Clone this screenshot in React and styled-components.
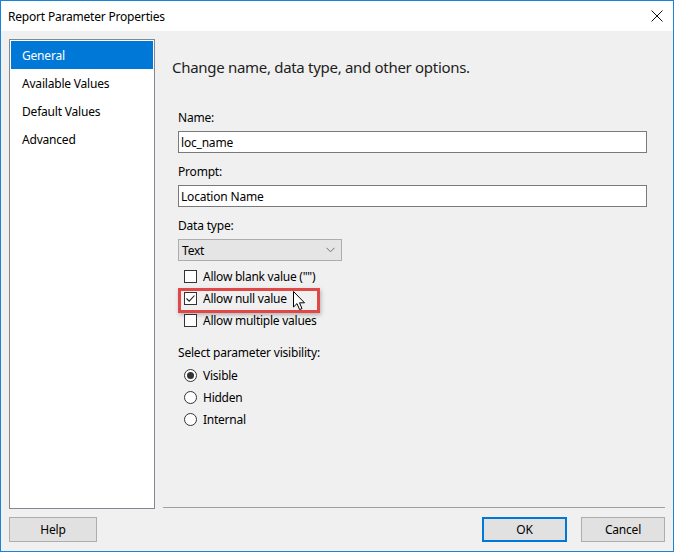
import React from "react";
import styled, { createGlobalStyle } from "styled-components";

const Global = createGlobalStyle`
  html, body { margin: 0; padding: 0; background: #ffffff; }
  * { box-sizing: border-box; }
  body { font-family: "Noto Sans", "Open Sans", sans-serif; font-size: 12px; color: #000; }
`;

const Window = styled.div`
  width: 674px;
  height: 552px;
  border: 1px solid #1883d7;
  display: flex;
  flex-direction: column;
  background: #f0f0f0;
`;

const TitleBar = styled.div`
  height: 30px;
  background: #ffffff;
  display: flex;
  align-items: center;
  justify-content: space-between;
  padding: 0 10px 0 7px;
  font-size: 12px;
  letter-spacing: -0.2px;
`;

const CloseBtn = styled.div`
  width: 12px;
  height: 12px;
  display: flex;
`;

const Body = styled.div`
  flex: 1;
  display: flex;
  flex-direction: column;
  padding: 8px 8px 9px 8px;
`;

const Main = styled.div`
  flex: 1;
  display: flex;
`;

const Sidebar = styled.div`
  width: 146px;
  background: #ffffff;
  border: 1px solid #828790;
  padding: 1px;
  display: flex;
  flex-direction: column;
`;

const NavItem = styled.div`
  height: 28px;
  display: flex;
  align-items: center;
  padding-left: 11px;
  font-size: 12px;
  letter-spacing: -0.2px;
  background: ${(p) => (p.$active ? "#0078d7" : "transparent")};
  color: ${(p) => (p.$active ? "#ffffff" : "#000000")};
`;

const Content = styled.div`
  flex: 1;
  margin-left: 8px;
  margin-bottom: 1px;
  border-bottom: 1px solid #a0a0a0;
  display: flex;
  flex-direction: column;
  padding: 18px 18px 0 9px;
`;

const Heading = styled.div`
  font-size: 15px;
  line-height: 20px;
  letter-spacing: -0.3px;
  color: #1e1e1e;
`;

const Form = styled.div`
  padding-left: 6px;
  margin-top: 33px;
  display: flex;
  flex-direction: column;
`;

const Label = styled.div`
  font-size: 12px;
  line-height: 16px;
  letter-spacing: -0.2px;
  margin-top: ${(p) => p.$mt || 0}px;
  margin-bottom: ${(p) => p.$mb || 5}px;
`;

const TextBox = styled.div`
  height: 22px;
  background: #ffffff;
  border: 1px solid #7a7a7a;
  display: flex;
  align-items: center;
  padding-left: 2px;
  font-size: 12px;
  letter-spacing: -0.2px;
`;

const Select = styled.div`
  width: 164px;
  height: 22px;
  background: #e5e5e5;
  border: 1px solid #adadad;
  display: flex;
  align-items: center;
  justify-content: space-between;
  padding: 0 6px 0 3px;
  font-size: 12px;
  letter-spacing: -0.2px;
`;

const Options = styled.div`
  display: flex;
  flex-direction: column;
  margin-top: 4px;
`;

const OptionRow = styled.div`
  position: relative;
  height: 22px;
  display: flex;
  align-items: center;
  padding-left: 6px;
  gap: 6px;
  font-size: 12px;
  letter-spacing: -0.25px;
`;

const Box = styled.div`
  width: 13px;
  height: 13px;
  border: 1px solid #333333;
  background: #ffffff;
  display: flex;
  align-items: center;
  justify-content: center;
`;

const Radio = styled.div`
  width: 13px;
  height: 13px;
  border: 1px solid #333333;
  border-radius: 50%;
  background: #ffffff;
  display: flex;
  align-items: center;
  justify-content: center;
  &::after {
    content: "";
    display: ${(p) => (p.$checked ? "block" : "none")};
    width: 7px;
    height: 7px;
    border-radius: 50%;
    background: #333333;
  }
`;

const Highlight = styled.div`
  position: absolute;
  left: 0;
  top: 1px;
  width: 142px;
  height: 25px;
  border: 3px solid #e04848;
  box-shadow: 1px 2px 4px rgba(0, 0, 0, 0.25);
  pointer-events: none;
`;

const Cursor = styled.svg`
  position: absolute;
  left: 115px;
  top: 4px;
`;

const VisLabel = styled(Label)`
  margin-top: 14px;
  margin-bottom: 3px;
`;

const Footer = styled.div`
  display: flex;
  align-items: center;
  margin-top: 8px;
  height: 25px;
`;

const Button = styled.div`
  width: ${(p) => p.$w}px;
  height: 25px;
  background: #e1e1e1;
  border: ${(p) => (p.$default ? "2px solid #0078d7" : "1px solid #adadad")};
  display: flex;
  align-items: center;
  justify-content: center;
  font-size: 12px;
  letter-spacing: -0.2px;
  margin-left: ${(p) => p.$ml || 0}px;
`;

const Spacer = styled.div`
  flex: 1;
`;

export default function App() {
  return (
    <>
      <Global />
      <Window>
        <TitleBar>
          <span>Report Parameter Properties</span>
          <CloseBtn>
            <svg width="12" height="12" viewBox="0 0 12 12">
              <path d="M0.5 0.5 L11.5 11.5 M11.5 0.5 L0.5 11.5" stroke="#111" strokeWidth="1" />
            </svg>
          </CloseBtn>
        </TitleBar>
        <Body>
          <Main>
            <Sidebar>
              <NavItem $active>General</NavItem>
              <NavItem>Available Values</NavItem>
              <NavItem>Default Values</NavItem>
              <NavItem>Advanced</NavItem>
            </Sidebar>
            <Content>
              <Heading>Change name, data type, and other options.</Heading>
              <Form>
                <Label>Name:</Label>
                <TextBox>loc_name</TextBox>
                <Label $mt={11}>Prompt:</Label>
                <TextBox>Location Name</TextBox>
                <Label $mt={11}>Data type:</Label>
                <Select>
                  <span>Text</span>
                  <svg width="9" height="6" viewBox="0 0 9 6">
                    <path d="M0.5 0.8 L4.5 4.8 L8.5 0.8" fill="none" stroke="#707070" strokeWidth="1" />
                  </svg>
                </Select>
                <Options>
                  <OptionRow>
                    <Box />
                    <span>Allow blank value ("")</span>
                  </OptionRow>
                  <OptionRow>
                    <Box>
                      <svg width="11" height="11" viewBox="0 0 11 11">
                        <path d="M1.5 5.5 L4.2 8.2 L9.5 2.5" fill="none" stroke="#222" strokeWidth="1.1" />
                      </svg>
                    </Box>
                    <span>Allow null value</span>
                    <Highlight />
                    <Cursor width="13" height="20" viewBox="0 0 13 20">
                      <path
                        d="M0.5 0.5 L0.5 16 L4 12.6 L6.6 18.6 L9 17.6 L6.5 11.8 L11.5 11.8 Z"
                        fill="#ffffff"
                        stroke="#000000"
                        strokeWidth="1"
                        strokeLinejoin="round"
                      />
                    </Cursor>
                  </OptionRow>
                  <OptionRow>
                    <Box />
                    <span>Allow multiple values</span>
                  </OptionRow>
                </Options>
                <VisLabel>Select parameter visibility:</VisLabel>
                <OptionRow>
                  <Radio $checked />
                  <span>Visible</span>
                </OptionRow>
                <OptionRow>
                  <Radio />
                  <span>Hidden</span>
                </OptionRow>
                <OptionRow>
                  <Radio />
                  <span>Internal</span>
                </OptionRow>
              </Form>
            </Content>
          </Main>
          <Footer>
            <Button $w={88}>Help</Button>
            <Spacer />
            <Button $w={85} $default>OK</Button>
            <Button $w={84} $ml={14}>Cancel</Button>
          </Footer>
        </Body>
      </Window>
    </>
  );
}
